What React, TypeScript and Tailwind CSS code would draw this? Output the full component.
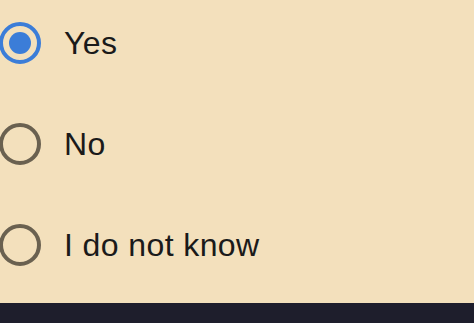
export default function App() {
  const options = ["Yes", "No", "I do not know"];
  const selected = 0;

  return (
    <div className="w-[474px] h-[323px] bg-[#f3e0bc] flex flex-col overflow-hidden font-['Liberation_Sans',Arial,sans-serif]">
      <div className="flex-1 flex flex-col gap-[60px] pt-[22px]">
        {options.map((label, i) => (
          <label key={label} className="flex items-center gap-[23px] h-[41px] -ml-[1px]">
            {i === selected ? (
              <span className="w-[42px] h-[42px] rounded-full border-[4px] border-[#3b7dd8] flex items-center justify-center shrink-0">
                <span className="w-[22px] h-[22px] rounded-full bg-[#3b7dd8]" />
              </span>
            ) : (
              <span className="w-[42px] h-[42px] rounded-full border-[4px] border-[#6a6150] shrink-0" />
            )}
            <span className="text-[32px] leading-none tracking-[0.4px] text-[#1a1a1a]">{label}</span>
          </label>
        ))}
      </div>
      <div className="h-[20px] bg-[#1e1e2c] shrink-0" />
    </div>
  );
}
